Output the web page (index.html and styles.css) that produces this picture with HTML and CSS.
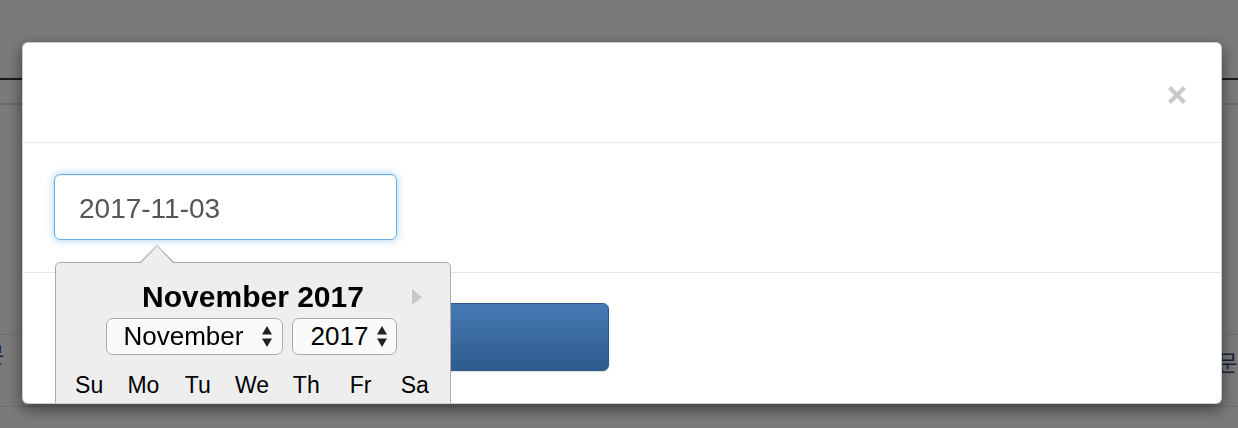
FILE: index.html
```html
<!DOCTYPE html>
<html lang="ko">
<head>
    <meta charset="UTF-8">
    <meta name="viewport" content="width=device-width, initial-scale=1.0">
    <title>Date Picker</title>
    <link rel="stylesheet" href="styles.css">
</head>
<body>
    <div class="page">
        <div class="navbar"></div>
        <div class="subbar"></div>
        <div class="list">
            <div class="list-row">
                <span class="cut-left">문</span>
                <span class="cut-right">문 법</span>
            </div>
        </div>
    </div>

    <div class="backdrop"></div>

    <div class="modal">
        <div class="modal-content">
            <div class="modal-header">
                <button class="close" type="button">
                    <svg width="20" height="20" viewBox="0 0 20 20">
                        <path d="M2.5 2.5 L17.5 17.5 M17.5 2.5 L2.5 17.5" stroke="#c9c9c9" stroke-width="4.2" fill="none"/>
                    </svg>
                </button>
            </div>
            <div class="modal-body">
                <div class="date-field">
                    <input id="date" class="form-control" type="text" value="2017-11-03">
                    <div class="datepicker">
                        <div class="dp-header">
                            <div class="dp-title">November 2017</div>
                            <span class="dp-next"></span>
                            <div class="dp-selects">
                                <div class="dp-select month">
                                    <span>November</span>
                                    <svg width="10" height="21" viewBox="0 0 10 21"><path d="M5 0 L10 8.5 L0 8.5 Z M0 12.5 L10 12.5 L5 21 Z" fill="#222"/></svg>
                                </div>
                                <div class="dp-select year">
                                    <span>2017</span>
                                    <svg width="10" height="21" viewBox="0 0 10 21"><path d="M5 0 L10 8.5 L0 8.5 Z M0 12.5 L10 12.5 L5 21 Z" fill="#222"/></svg>
                                </div>
                            </div>
                        </div>
                        <div class="dp-days">
                            <span>Su</span><span>Mo</span><span>Tu</span><span>We</span><span>Th</span><span>Fr</span><span>Sa</span>
                        </div>
                    </div>
                </div>
            </div>
            <div class="modal-footer">
                <button class="btn-primary" type="button"></button>
            </div>
        </div>
    </div>
</body>
</html>
```

FILE: styles.css
```css
*{
    margin: 0;
    padding: 0;
    box-sizing: border-box;
}
body{
    width: 1238px;
    height: 428px;
    overflow: hidden;
    background-color: #f4f4f4;
    font-family: "Liberation Sans", Arial, sans-serif;
}
.navbar{
    height: 80px;
    border-bottom: 2px solid #363636;
}
.subbar{
    height: 25px;
    border-bottom: 2px solid #d4d4d4;
}
.list{
    padding-top: 229px;
}
.list-row{
    height: 73px;
    border-top: 1px solid #dcdcdc;
    border-bottom: 1px solid #dcdcdc;
    display: flex;
    justify-content: space-between;
    align-items: flex-start;
    padding-top: 4px;
    font-family: "Noto Sans CJK KR", sans-serif;
    font-size: 22px;
    line-height: 28px;
    color: #34466e;
    overflow: hidden;
}
.cut-left{
    margin-left: -16px;
}
.cut-right{
    margin-top: 8px;
    margin-right: -20px;
    letter-spacing: -2px;
}
.backdrop{
    position: fixed;
    inset: 0;
    background-color: rgba(0, 0, 0, .5);
}
.modal{
    position: fixed;
    inset: 0;
    padding: 42px 0 0 22px;
}
.modal-content{
    width: 1200px;
    height: 362px;
    background-color: #fff;
    border: 1px solid rgba(0, 0, 0, .2);
    border-radius: 6px;
    box-shadow: 0 5px 15px rgba(0, 0, 0, .5);
    overflow: hidden;
}
.modal-header{
    height: 100px;
    border-bottom: 1px solid #e5e5e5;
    display: flex;
    justify-content: flex-end;
    align-items: center;
    padding: 5px 34px 0 0;
}
.close{
    border: none;
    background: none;
    display: flex;
}
.modal-body{
    height: 130px;
    border-bottom: 1px solid #e5e5e5;
    padding: 31px 0 0 31px;
}
.date-field{
    position: relative;
    width: 343px;
}
.form-control{
    width: 343px;
    height: 66px;
    padding: 3px 24px 0;
    font-family: "Liberation Sans", Arial, sans-serif;
    font-size: 28px;
    color: #555;
    border: 1px solid #66afe9;
    border-radius: 6px;
    outline: 0;
    box-shadow: inset 0 1px 1px rgba(0, 0, 0, .075), 0 0 8px rgba(102, 175, 233, .6);
}
.datepicker{
    position: absolute;
    top: 88px;
    left: 1px;
    width: 396px;
    height: 200px;
    background-color: #eee;
    border: 1px solid #aaa;
    border-radius: 5px;
    z-index: 2;
}
.datepicker::before,
.datepicker::after{
    content: "";
    position: absolute;
    width: 0;
    height: 0;
}
.datepicker::before{
    top: -18px;
    left: 84px;
    border-left: 17px solid transparent;
    border-right: 17px solid transparent;
    border-bottom: 17px solid #aaa;
}
.datepicker::after{
    top: -17px;
    left: 85px;
    border-left: 16px solid transparent;
    border-right: 16px solid transparent;
    border-bottom: 17px solid #eee;
}
.dp-header{
    position: relative;
    padding-top: 17px;
    text-align: center;
}
.dp-title{
    font-size: 30px;
    font-weight: bold;
    line-height: 34px;
    color: #000;
}
.dp-next{
    position: absolute;
    top: 26px;
    right: 28px;
    width: 0;
    height: 0;
    border-top: 8.5px solid transparent;
    border-bottom: 8.5px solid transparent;
    border-left: 10px solid #c8c8c8;
}
.dp-selects{
    display: flex;
    justify-content: center;
    gap: 9px;
    margin: 4px 4px 0 0;
}
.dp-select{
    height: 37px;
    display: flex;
    align-items: center;
    justify-content: space-between;
    background-color: #fafafa;
    border: 1px solid #aaa;
    border-radius: 7px;
    font-size: 26px;
    color: #000;
}
.dp-select.month{
    width: 177px;
    padding: 0 10px 0 17px;
}
.dp-select.year{
    width: 105px;
    padding: 0 9px 0 18px;
}
.dp-days{
    display: grid;
    grid-template-columns: repeat(7, 1fr);
    margin: 17px 8px 0 6px;
    font-size: 23px;
    line-height: 26px;
    text-align: center;
    color: #000;
}
.modal-footer{
    padding: 30px 0 0 220px;
}
.btn-primary{
    display: block;
    width: 366px;
    height: 68px;
    border: 1px solid #2d5a8c;
    border-radius: 6px;
    background-image: linear-gradient(180deg, #4679b4, #2f5b8d);
    box-shadow: 0 1px 2px rgba(0, 0, 0, .15);
}
```
